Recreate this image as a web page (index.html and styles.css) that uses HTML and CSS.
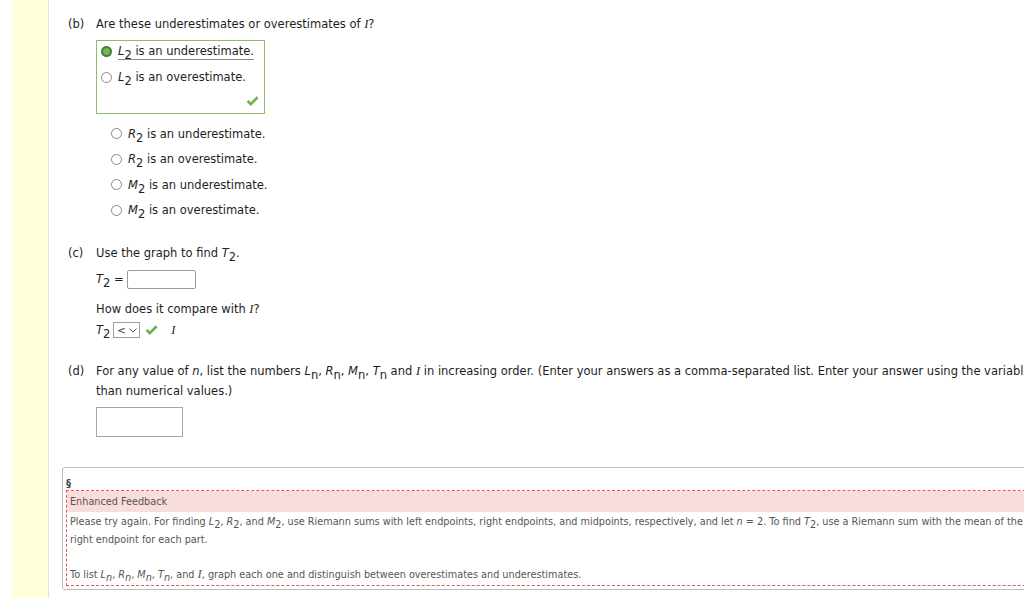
FILE: index.html
```html
<!DOCTYPE html>
<html>
<head>
<meta charset="utf-8">
<link rel="stylesheet" href="styles.css">
</head>
<body>
<div class="page">
  <div class="gutter"></div>
  <div class="content">
    <section class="part">
      <div class="lbl">(b)</div>
      <div class="body">
        <div class="line">Are these underestimates or overestimates of <i class="serif">I</i>?</div>
        <div class="answer-box">
          <div class="opt"><span class="radio on"></span><span class="u"><i>L</i><sub>2</sub> is an underestimate.</span></div>
          <div class="opt gap"><span class="radio"></span><span><i>L</i><sub>2</sub> is an overestimate.</span></div>
          <div class="check-row"><svg class="check" viewBox="0 0 14 12"><path d="M0.6 6.4 L2.7 4.4 L5.1 6.8 L11.6 0.4 L13.6 2.4 L5.1 10.9 Z"/></svg></div>
        </div>
        <div class="opts">
          <div class="opt"><span class="radio"></span><span><i>R</i><sub>2</sub> is an underestimate.</span></div>
          <div class="opt"><span class="radio"></span><span><i>R</i><sub>2</sub> is an overestimate.</span></div>
          <div class="opt"><span class="radio"></span><span><i>M</i><sub>2</sub> is an underestimate.</span></div>
          <div class="opt"><span class="radio"></span><span><i>M</i><sub>2</sub> is an overestimate.</span></div>
        </div>
      </div>
    </section>

    <section class="part part-c">
      <div class="lbl">(c)</div>
      <div class="body">
        <div class="line">Use the graph to find <i>T</i><sub>2</sub>.</div>
        <div class="row r-input"><span><i>T</i><sub>2</sub> =</span><span class="field small"></span></div>
        <div class="line r-how">How does it compare with <i class="serif">I</i>?</div>
        <div class="row r-select">
          <span><i>T</i><sub>2</sub></span>
          <span class="select">&lt;<svg class="chev" viewBox="0 0 8 5"><path d="M0.5 0.5 L4 4 L7.5 0.5"/></svg></span>
          <svg class="check" viewBox="0 0 14 12"><path d="M0.6 6.4 L2.7 4.4 L5.1 6.8 L11.6 0.4 L13.6 2.4 L5.1 10.9 Z"/></svg>
          <i class="serif i-rel">I</i>
        </div>
      </div>
    </section>

    <section class="part part-d">
      <div class="lbl">(d)</div>
      <div class="body">
        <div class="line nw">For any value of <i>n</i>, list the numbers <i>L</i><sub>n</sub>, <i>R</i><sub>n</sub>, <i>M</i><sub>n</sub>, <i>T</i><sub>n</sub> and <i class="serif">I</i> in increasing order. (Enter your answers as a comma-separated list. Enter your answer using the variables rather</div>
        <div class="line nw">than numerical values.)</div>
        <div class="field big"></div>
      </div>
    </section>

    <section class="feedback">
      <div class="sect">§</div>
      <div class="dash">
        <div class="fb-head">Enhanced Feedback</div>
        <div class="fb-line first">Please try again. For finding <i>L</i><sub>2</sub>, <i>R</i><sub>2</sub>, and <i>M</i><sub>2</sub>, use Riemann sums with left endpoints, right endpoints, and midpoints, respectively, and let <i>n</i> = 2. To find <i>T</i><sub>2</sub>, use a Riemann sum with the mean of the left and</div>
        <div class="fb-line">right endpoint for each part.</div>
        <div class="fb-line blank"></div>
        <div class="fb-line">To list <i>L</i><sub><i>n</i></sub>, <i>R</i><sub><i>n</i></sub>, <i>M</i><sub><i>n</i></sub>, <i>T</i><sub><i>n</i></sub>, and <i class="serif">I</i>, graph each one and distinguish between overestimates and underestimates.</div>
      </div>
    </section>
  </div>
</div>
</body>
</html>
```

FILE: styles.css
```css
html, body {
  margin: 0;
  padding: 0;
}
body {
  width: 1024px;
  height: 598px;
  overflow: hidden;
  background: #fff;
  font-family: "DejaVu Sans", Verdana, sans-serif;
  font-size: 11.5px;
  color: #1e1e1e;
}
.page {
  display: flex;
  width: 1200px;
  min-height: 598px;
}
.gutter {
  flex: none;
  margin-left: 12px;
  width: 36px;
  background: #ffffd9;
  border-right: 1px solid #e4e4cf;
}
.content {
  flex: none;
  width: 1130px;
  padding: 14px 0 0 13px;
}
i {
  font-style: italic;
}
i.serif {
  font-family: "Liberation Serif", "Times New Roman", serif;
  font-size: 12.5px;
}
sub {
  font-size: 1em;
  vertical-align: -0.35em;
  line-height: 0;
  font-style: normal;
}
.part {
  display: grid;
  grid-template-columns: 28px 1fr;
  padding-left: 6px;
}
.lbl {
  line-height: 20px;
}
.line {
  line-height: 20px;
}
.nw {
  white-space: nowrap;
}
.answer-box {
  margin-top: 6px;
  width: 167px;
  border: 1px solid #8cbd68;
}
.opt {
  display: flex;
  align-items: center;
  height: 20px;
  white-space: nowrap;
}
.answer-box .opt {
  padding-left: 4px;
}
.answer-box .opt.gap {
  margin-top: 6px;
}
.radio {
  flex: none;
  box-sizing: border-box;
  width: 11px;
  height: 11px;
  border-radius: 50%;
  border: 1px solid #8a8a8a;
  background: #fff;
  margin-right: 6px;
}
.radio.on {
  border: 2px solid #3f7f2c;
  background: #74b356;
}
.u {
  line-height: 16px;
  border-bottom: 1px solid #8a8a8a;
}
.check-row {
  display: flex;
  justify-content: flex-end;
  height: 16px;
  margin-top: 6px;
  padding: 0 5px 4px 0;
  align-items: center;
}
.check {
  width: 13px;
  height: 11px;
  fill: #6db24d;
}
.opts {
  margin: 7px 0 0 15px;
}
.opts .opt {
  height: 25.5px;
}
.part-c {
  margin-top: 20px;
}
.row {
  display: flex;
  align-items: center;
  height: 20px;
  white-space: nowrap;
}
.r-input {
  margin-top: 6px;
  gap: 3px;
}
.field {
  box-sizing: border-box;
  border: 1px solid #9a9a9a;
  border-radius: 2px;
  background: #fff;
}
.field.small {
  width: 69px;
  height: 19px;
}
.r-how {
  margin-top: 10px;
}
.r-select {
  margin-top: 1px;
}
.select {
  box-sizing: border-box;
  display: inline-flex;
  align-items: center;
  gap: 3px;
  height: 16px;
  width: 27px;
  margin-left: 3px;
  padding-left: 3px;
  border: 1px solid #a0a0a0;
  font-size: 10px;
  color: #333;
}
.chev {
  width: 8px;
  height: 5px;
  fill: none;
  stroke: #555;
  stroke-width: 1;
}
.r-select .check {
  margin-left: 5px;
}
.i-rel {
  margin-left: 13px;
}
.part-d {
  margin-top: 21px;
}
.field.big {
  margin-top: 6px;
  width: 87px;
  height: 30px;
  border-radius: 0;
  border-color: #a5a5a5;
}
.feedback {
  margin-top: 30px;
  width: 1100px;
  border: 1px solid #bdbdbd;
  border-radius: 3px;
  padding: 10px 0 3px 3px;
  color: #555;
  font-size: 9.7px;
}
.sect {
  font-weight: bold;
  line-height: 12px;
  font-size: 10px;
  color: #444;
}
.dash {
  border: 1px dashed #e8564f;
  padding-bottom: 1px;
}
.fb-head {
  background: #f9dcdc;
  height: 21px;
  line-height: 21px;
  padding-left: 3px;
}
.fb-line {
  line-height: 18px;
  padding-left: 3px;
  white-space: nowrap;
}
.fb-line.first {
  padding-top: 1px;
}
.fb-line.blank {
  height: 16px;
}
```
